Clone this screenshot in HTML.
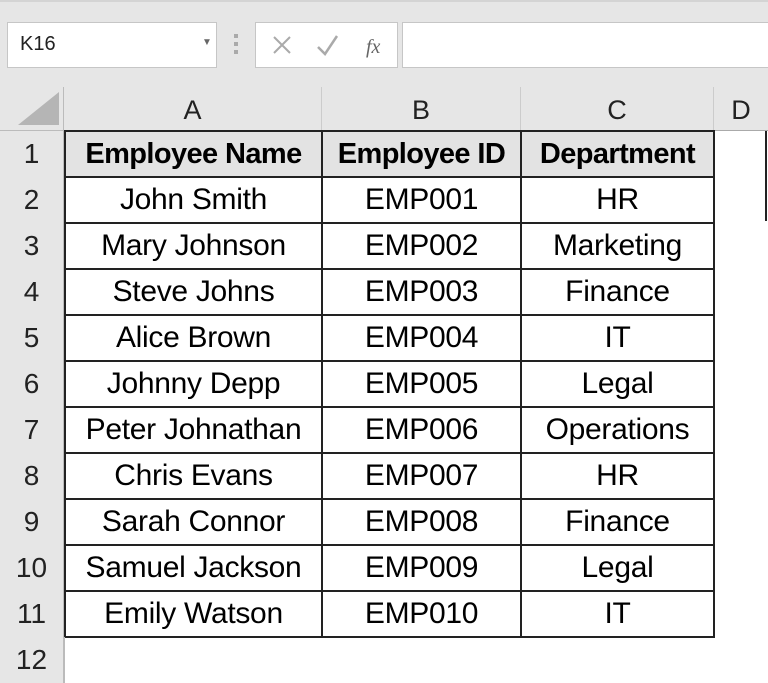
<!DOCTYPE html>
<html><head><style>
body{margin:0;width:768px;height:679px;overflow:hidden;background:#fff;font-family:"Liberation Sans",sans-serif;position:relative}
.top{position:absolute;left:0;top:0;width:768px;height:87px;background:#e6e6e6;border-top:2px solid #d4d4d4;box-sizing:border-box}
.box{position:absolute;background:#fff;border:1px solid #c6c6c6;box-sizing:border-box}
.hdr{position:absolute;background:#e6e6e6;color:#222;font-size:27px;text-align:center;box-sizing:border-box}
.c{position:absolute;font-size:30px;text-align:center;color:#000;box-sizing:border-box;line-height:44px;white-space:nowrap;letter-spacing:-0.3px}
</style></head><body>
<div class="top">
<div class="box" style="left:7px;top:20px;width:210px;height:46px"><span style="position:absolute;left:12px;top:10px;font-size:20px;color:#222">K16</span><span style="position:absolute;left:194px;top:14px;font-size:10px;color:#666">▼</span></div>
<div style="position:absolute;left:234px;top:32px;width:4px;height:22px;background:repeating-linear-gradient(#aaa 0 4px,transparent 4px 8px)"></div>
<div class="box" style="left:255px;top:20px;width:143px;height:46px">
<svg width="143" height="46" style="position:absolute;left:0;top:0"><path d="M18 14 L34 30 M34 14 L18 30" stroke="#aaa" stroke-width="2"/><path d="M62 24 L69 31 L81 13" stroke="#aaa" stroke-width="2.5" fill="none"/><text x="110" y="30" font-family="Liberation Serif" font-style="italic" font-size="20" fill="#666">fx</text></svg></div>
<div class="box" style="left:402px;top:20px;width:380px;height:46px"></div>
</div>
<div class="hdr" style="left:0;top:87px;width:64px;height:44px;border-right:1px solid #bbb;border-bottom:1px solid #bbb"><svg width="64" height="44" style="position:absolute;left:0;top:0"><path d="M18 38 L59 38 L59 5 Z" fill="#b5b5b5"/></svg></div>
<div class="hdr" style="left:64px;top:87px;width:258px;height:44px;line-height:46px;border-right:1px solid #ccc;border-bottom:1px solid #aaa">A</div>
<div class="hdr" style="left:322px;top:87px;width:199px;height:44px;line-height:46px;border-right:1px solid #ccc;border-bottom:1px solid #aaa">B</div>
<div class="hdr" style="left:521px;top:87px;width:193px;height:44px;line-height:46px;border-right:1px solid #ccc;border-bottom:1px solid #aaa">C</div>
<div class="hdr" style="left:714px;top:87px;width:54px;height:44px;line-height:46px;border-bottom:1px solid #aaa">D</div>
<div id="rows"></div>
<script>
var d=[["Employee Name","Employee ID","Department"],["John Smith","EMP001","HR"],["Mary Johnson","EMP002","Marketing"],["Steve Johns","EMP003","Finance"],["Alice Brown","EMP004","IT"],["Johnny Depp","EMP005","Legal"],["Peter Johnathan","EMP006","Operations"],["Chris Evans","EMP007","HR"],["Sarah Connor","EMP008","Finance"],["Samuel Jackson","EMP009","Legal"],["Emily Watson","EMP010","IT"]];
var h="",xs=[64,321,520],ws=[259,201,195];
for(var i=0;i<12;i++){var t=131+46*i;
h+='<div class="hdr" style="left:0;top:'+t+'px;width:65px;height:46px;line-height:46px;border-right:2px solid #bbb;font-size:28px">'+(i+1)+'</div>';
if(i<11){for(var j=0;j<3;j++){h+='<div class="c" style="left:'+xs[j]+'px;top:'+(t-1)+'px;width:'+ws[j]+'px;height:48px;border:2px solid #222;'+(i==0?'background:#e3e3e3;font-weight:bold;font-size:29px;letter-spacing:-0.6px;':'')+'">'+d[i][j]+'</div>';}}}
document.getElementById("rows").innerHTML=h;
</script>
<div style="position:absolute;left:765px;top:131px;width:2px;height:90px;background:#222"></div>
</body></html>
